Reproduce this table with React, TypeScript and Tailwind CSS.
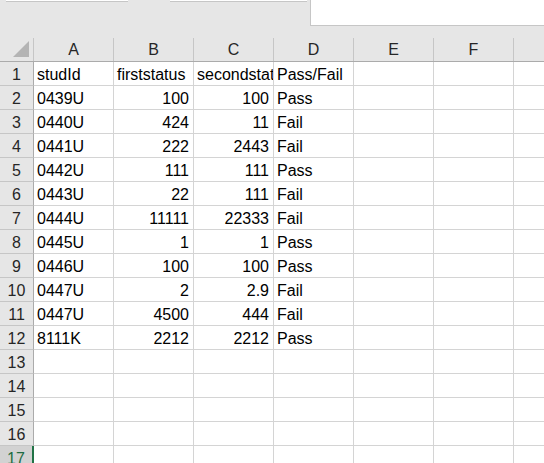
import React from "react";

const rows: [string, string, string, string][] = [
  ["studId", "firststatus", "secondstatus", "Pass/Fail"],
  ["0439U", "100", "100", "Pass"],
  ["0440U", "424", "11", "Fail"],
  ["0441U", "222", "2443", "Fail"],
  ["0442U", "111", "111", "Pass"],
  ["0443U", "22", "111", "Fail"],
  ["0444U", "11111", "22333", "Fail"],
  ["0445U", "1", "1", "Pass"],
  ["0446U", "100", "100", "Pass"],
  ["0447U", "2", "2.9", "Fail"],
  ["0447U", "4500", "444", "Fail"],
  ["8111K", "2212", "2212", "Pass"],
];

const columns = ["A", "B", "C", "D", "E", "F"];

function Cell({ value, align }: { value?: string; align: "left" | "right" }) {
  return (
    <div
      className={`w-[80px] shrink-0 h-full border-r border-[#d4d4d4] overflow-hidden whitespace-nowrap pt-[3px] ${
        align === "right" ? "text-right pr-[4px]" : "text-left pl-[3px]"
      }`}
    >
      {value}
    </div>
  );
}

export default function App() {
  const allRows = Array.from({ length: 17 }, (_, i) => rows[i]);

  return (
    <div
      className="w-[544px] h-[463px] overflow-hidden bg-[#e6e6e6] text-[16px] text-black"
      style={{ fontFamily: '"Liberation Sans", Arial, sans-serif' }}
    >
      {/* Toolbar strip with cut-off name box and formula bar */}
      <div className="relative h-[38px]">
        <div className="absolute left-[6px] top-0 w-[122px] h-[2px] bg-white border-b border-[#c6c6c6]" />
        <div className="absolute left-[170px] top-0 w-[137px] h-[2px] bg-white border-b border-[#c6c6c6]" />
        <div className="absolute left-[310px] top-0 right-0 h-[26px] bg-white border-l border-b border-[#c6c6c6]" />
      </div>

      {/* Column headers */}
      <div className="flex h-[24px] border-b border-[#ababab] leading-[23px] text-[#262626]">
        <div className="w-[34px] shrink-0 border-r border-[#c6c6c6] relative">
          <svg className="absolute left-[13px] top-[3px]" width="16" height="16" viewBox="0 0 16 16">
            <polygon points="16,0 16,16 0,16" fill="#b4b4b4" />
          </svg>
        </div>
        {columns.map((c) => (
          <div key={c} className="w-[80px] shrink-0 border-r border-[#c6c6c6] text-center">
            {c}
          </div>
        ))}
        <div className="flex-1" />
      </div>

      {/* Data rows */}
      {allRows.map((r, i) => {
        const selected = i === 16;
        return (
          <div key={i} className="flex h-[24px] leading-[20px]">
            <div
              className={`w-[34px] shrink-0 text-center border-b pt-[3px] ${
                selected
                  ? "bg-[#d2d2d2] border-r-2 border-r-[#217346] border-b-[#c6c6c6] text-[#1e6b41]"
                  : "border-r border-r-[#ababab] border-b-[#c6c6c6] text-[#262626]"
              }`}
            >
              {i + 1}
            </div>
            <div className="flex flex-1 bg-white border-b border-[#d4d4d4]">
              <Cell value={r?.[0]} align="left" />
              <Cell value={r?.[1]} align={i === 0 ? "left" : "right"} />
              <Cell value={r?.[2]} align={i === 0 ? "left" : "right"} />
              <Cell value={r?.[3]} align="left" />
              <Cell align="left" />
              <Cell align="left" />
              <div className="flex-1" />
            </div>
          </div>
        );
      })}
    </div>
  );
}
